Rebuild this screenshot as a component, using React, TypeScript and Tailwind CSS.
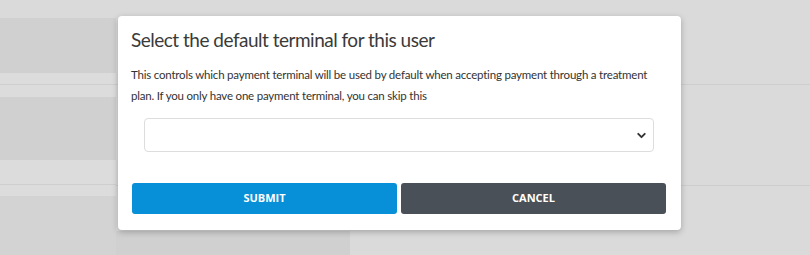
import { ChevronDown } from "lucide-react"

const App = function () {
    return (
        <div className="relative w-[810px] h-[255px] overflow-hidden bg-[#dadada]" style={{ fontFamily: '"Open Sans", "Liberation Sans", sans-serif' }}>
            {/* page behind the overlay */}
            <div className="flex h-full">
                <div className="w-[116px] flex flex-col pt-[18px]">
                    <div className="h-[55px] bg-[#d0d0d0]"></div>
                    <div className="h-[24px] bg-[#dcdcdc] flex flex-col">
                        <div className="h-[11px]"></div>
                        <div className="h-px bg-[#cfcfcf]"></div>
                    </div>
                    <div className="h-[63px] bg-[#d0d0d0]"></div>
                    <div className="h-[36px] bg-[#dcdcdc] flex flex-col">
                        <div className="h-[24px]"></div>
                        <div className="h-px bg-[#cfcfcf]"></div>
                    </div>
                    <div className="flex-1 bg-[#d3d3d3]"></div>
                </div>
                <div className="flex-1 flex flex-col">
                    <div className="h-[84px]"></div>
                    <div className="h-px bg-[#cecece]"></div>
                    <div className="h-[100px]"></div>
                    <div className="h-px bg-[#cecece]"></div>
                    <div className="flex-1 flex">
                        <div className="w-[234px] mt-[45px] bg-[#d0d0d0]"></div>
                    </div>
                </div>
            </div>

            {/* modal */}
            <div className="absolute left-[118px] top-[16px] w-[563px] bg-white rounded-[4px] shadow-[0_2px_6px_rgba(0,0,0,0.25)] pl-[13px] pr-[15px] pt-[7px] pb-[16px]">
                <h2 className="text-[19px] leading-[34px] tracking-[-0.5px] text-[#3a3a3a] font-normal" style={{ fontFamily: 'Lato, sans-serif' }}>Select the default terminal for this user</h2>
                <p className="mt-[7px] mr-[6px] text-[11.5px] leading-[21px] tracking-[-0.2px] text-[#333]" style={{ fontFamily: 'Lato, sans-serif' }}>
                    This controls which payment terminal will be used by default when accepting payment through a treatment plan. If you only have one payment terminal, you can skip this
                </p>
                <div className="mt-[12px] ml-[13px] mr-[12px] h-[34px] border border-[#dddddd] rounded-[4px] flex items-center justify-end pr-[5px]">
                    <ChevronDown className="w-[13px] h-[13px] text-[#333]" strokeWidth={3.5} />
                </div>
                <div className="mt-[31px] flex gap-[4px] pl-px">
                    <button className="flex-1 h-[31px] rounded-[3px] bg-[#078fd7] text-white text-[11px] font-bold">SUBMIT</button>
                    <button className="flex-1 h-[31px] rounded-[3px] bg-[#4a5057] text-white text-[11px] font-bold">CANCEL</button>
                </div>
            </div>
        </div>
    )
}

export default App
